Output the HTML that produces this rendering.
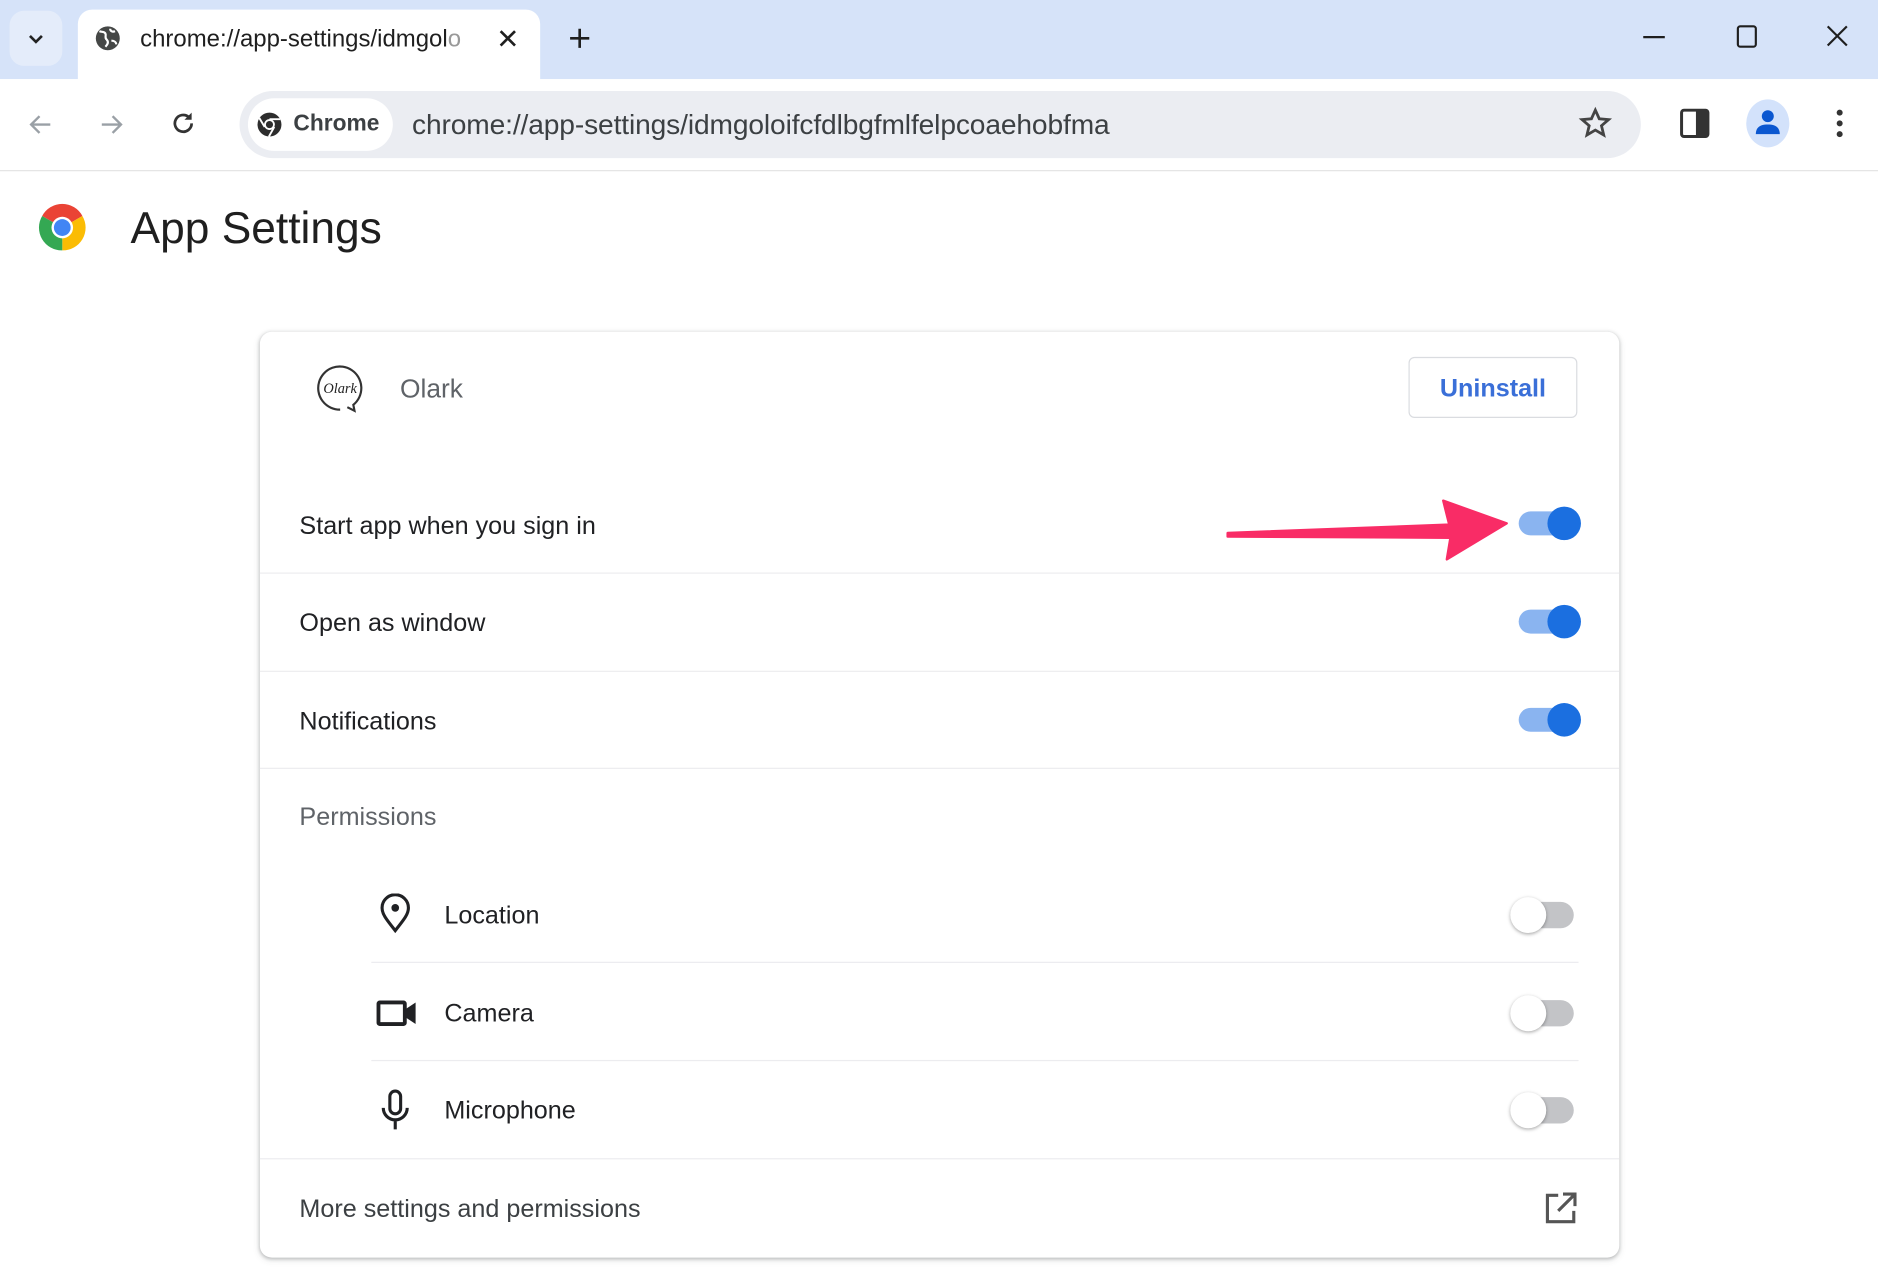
<!DOCTYPE html>
<html><head><meta charset="utf-8">
<style>
html,body{margin:0;padding:0;width:1878px;height:1270px;overflow:hidden;background:#fff;font-family:"Liberation Sans",Arial,sans-serif;}
#s{position:absolute;left:0;top:0;width:1568px;height:1061px;transform:scale(1.19770);transform-origin:0 0;background:#fff;}
.a{position:absolute;}
.t{position:absolute;white-space:nowrap;color:#202124;}
.on .tr{position:absolute;left:0;top:0;width:48px;height:20px;border-radius:10px;background:#8ab4f0;}
.on .th{position:absolute;left:24px;top:-4px;width:28px;height:28px;border-radius:50%;background:#1b6fe0;}
.off .tr{position:absolute;left:8px;top:0;width:44px;height:22px;border-radius:11px;background:#c3c4c7;}
.off .th{position:absolute;left:-1px;top:-4px;width:30px;height:30px;border-radius:50%;background:#fff;box-shadow:0 1px 3px rgba(0,0,0,.35);}
.sep{position:absolute;height:1px;background:#ececef;}
.r{font-size:21px;}
</style></head><body>
<div id="s">
<div class="a" style="left:0;top:0;width:1568px;height:66px;background:#d6e3f9;"></div>
<div class="a" style="left:8px;top:9px;width:44px;height:46px;border-radius:12px;background:#e4ecfa;"></div>
<svg class="a" style="left:20px;top:22px" width="20" height="20" viewBox="0 0 20 20"><path d="M5 8l5 5 5-5" fill="none" stroke="#222" stroke-width="2.2"/></svg>
<div class="a" style="left:65px;top:8px;width:386px;height:60px;background:#fff;border-radius:12px 12px 0 0;"></div>
<svg class="a" style="left:78px;top:20px" width="24" height="24" viewBox="0 0 24 24"><circle cx="12" cy="12" r="10" fill="#454746"/><path d="M5 6c2 1 4 0 5 2s-1 3 1 5 1 4-1 6M14 4c0 2 2 3 4 2M15 14c2 0 4 1 4 3" fill="none" stroke="#fff" stroke-width="1.8"/></svg>
<div class="t" style="left:117px;top:22px;font-size:20px;color:#1f1f1f;">chrome://app-settings/idmgol<span style="color:#999">o</span></div>
<svg class="a" style="left:415px;top:23px" width="18" height="18" viewBox="0 0 18 18"><path d="M3 3l12 12M15 3L3 15" stroke="#1f1f1f" stroke-width="2.2"/></svg>
<svg class="a" style="left:474px;top:22px" width="20" height="20" viewBox="0 0 20 20"><path d="M10 2v16M2 10h16" stroke="#1f1f1f" stroke-width="2.2"/></svg>
<svg class="a" style="left:1370px;top:20px" width="22" height="22"><path d="M2 11h18" stroke="#1f1f1f" stroke-width="1.8"/></svg>
<svg class="a" style="left:1448px;top:20px" width="22" height="22"><rect x="3" y="2" width="15" height="17" rx="2" fill="none" stroke="#1f1f1f" stroke-width="1.8"/></svg>
<svg class="a" style="left:1523px;top:19px" width="22" height="22"><path d="M3 3l16 16M19 3L3 19" stroke="#1f1f1f" stroke-width="1.8"/></svg>
<svg class="a" style="left:22px;top:92px" width="24" height="24" viewBox="0 0 24 24"><path d="M20 12H5M11 5l-7 7 7 7" fill="none" stroke="#9aa0a6" stroke-width="2"/></svg>
<svg class="a" style="left:81px;top:92px" width="24" height="24" viewBox="0 0 24 24"><path d="M4 12h15M13 5l7 7-7 7" fill="none" stroke="#9aa0a6" stroke-width="2"/></svg>
<svg class="a" style="left:141px;top:91px" width="24" height="24" viewBox="0 0 24 24"><path d="M19 12a7 7 0 1 1-2.2-5.1" fill="none" stroke="#333" stroke-width="2.3"/><path d="M19 3v6h-6z" fill="#333"/></svg>
<div class="a" style="left:200px;top:76px;width:1170px;height:56px;border-radius:28px;background:#ebedf2;"></div>
<div class="a" style="left:207px;top:82px;width:121px;height:44px;border-radius:22px;background:#fff;"></div>
<svg class="a" style="left:213px;top:92px" width="24" height="24" viewBox="0 0 24 24"><circle cx="12" cy="12" r="10" fill="#2d2d2d"/><circle cx="12" cy="12" r="4.5" fill="#fff"/><circle cx="12" cy="12" r="3" fill="#2d2d2d"/><path d="M12 7.5h9M8 14l-4.5-7.5M16 14l-4.5 8" stroke="#fff" stroke-width="1.6"/></svg>
<div class="t" style="left:245px;top:93px;font-size:19px;font-weight:bold;color:#3c4043;">Chrome</div>
<div class="t" style="left:344px;top:91px;font-size:23.5px;color:#3c4043;letter-spacing:-0.1px;">chrome://app-settings/idmgoloifcfdlbgfmlfelpcoaehobfma</div>
<svg class="a" style="left:1318px;top:89px" width="28" height="28" viewBox="0 0 24 24"><path d="M12 2.5l2.8 6.2 6.7.6-5.1 4.4 1.6 6.6L12 16.8l-6 3.5 1.6-6.6-5.1-4.4 6.7-.6z" fill="none" stroke="#444" stroke-width="2"/></svg>
<svg class="a" style="left:1402px;top:90px" width="26" height="26"><rect x="2" y="2" width="22" height="22" rx="2" fill="none" stroke="#333" stroke-width="2.5"/><rect x="14" y="2" width="10" height="22" fill="#333"/></svg>
<div class="a" style="left:1458px;top:83px;width:36px;height:40px;border-radius:50%;background:#d3e2fb;"></div>
<svg class="a" style="left:1462px;top:88px" width="28" height="28" viewBox="0 0 28 28"><circle cx="14" cy="9" r="5" fill="#0b57d0"/><path d="M4 24c0-6 4-8 10-8s10 2 10 8z" fill="#0b57d0"/></svg>
<svg class="a" style="left:1530px;top:90px" width="12" height="28"><circle cx="6" cy="4" r="2.5" fill="#333"/><circle cx="6" cy="13" r="2.5" fill="#333"/><circle cx="6" cy="22" r="2.5" fill="#333"/></svg>
<div class="a" style="left:0;top:142px;width:1568px;height:1px;background:#e3e3e3;"></div>
<svg class="a" style="left:32px;top:170px" width="40" height="40" viewBox="0 0 40 40"><path d="M20 20L3.2 10.3A19 19 0 0 1 36.8 10.3z" fill="#ea4335"/><path d="M20 20L36.8 10.3A19 19 0 0 1 20 39z" fill="#fbbc04"/><path d="M20 20L20 39A19 19 0 0 1 3.2 10.3z" fill="#34a853"/><circle cx="20" cy="20" r="9" fill="#fff"/><circle cx="20" cy="20" r="7" fill="#4285f4"/></svg>
<div class="t" style="left:109px;top:170px;font-size:37px;color:#1f1f1f;">App Settings</div>
<div class="a" style="left:217px;top:277px;width:1135px;height:773px;border-radius:10px;background:#fff;box-shadow:0 1px 3px rgba(60,64,67,.3),0 2px 6px rgba(60,64,67,.12);"></div>
<svg class="a" style="left:262px;top:302px" width="44" height="44" viewBox="0 0 44 44"><path d="M22 40A18 18 0 1 1 33 36l1 5-6-3" fill="none" stroke="#333" stroke-width="1.8"/><text x="22" y="26" font-family="Liberation Serif,serif" font-style="italic" font-size="12" text-anchor="middle" fill="#222">Olark</text></svg>
<div class="t" style="left:334px;top:312px;font-size:22px;color:#5f6368;">Olark</div>
<div class="a" style="left:1176px;top:298px;width:141px;height:51px;border:1px solid #dadce0;border-radius:5px;box-sizing:border-box;"></div>
<div class="t" style="left:1176px;top:313px;width:141px;text-align:center;font-size:21px;font-weight:bold;color:#3a6fd8;">Uninstall</div>

<div class="t r" style="left:250px;top:428px;">Start app when you sign in</div>
<div class="a on" style="left:1268px;top:427px;"><div class="tr"></div><div class="th"></div></div>
<div class="sep" style="left:217px;top:478px;width:1135px;"></div>
<div class="t r" style="left:250px;top:509px;">Open as window</div>
<div class="a on" style="left:1268px;top:509px;"><div class="tr"></div><div class="th"></div></div>
<div class="sep" style="left:217px;top:560px;width:1135px;"></div>
<div class="t r" style="left:250px;top:591px;">Notifications</div>
<div class="a on" style="left:1268px;top:591px;"><div class="tr"></div><div class="th"></div></div>
<div class="sep" style="left:217px;top:641px;width:1135px;"></div>
<div class="t r" style="left:250px;top:671px;color:#5f6368;">Permissions</div>
<svg class="a" style="left:316px;top:746px" width="28" height="34" viewBox="0 0 28 34"><path d="M14 31C6 21 3 17 3 12a11 11 0 0 1 22 0c0 5-3 9-11 19z" fill="none" stroke="#202124" stroke-width="2.6"/><circle cx="14" cy="12" r="3.2" fill="#202124"/></svg>
<div class="t r" style="left:371px;top:753px;">Location</div>
<div class="a off" style="left:1262px;top:753px;"><div class="tr"></div><div class="th"></div></div>
<div class="sep" style="left:310px;top:803px;width:1008px;"></div>
<svg class="a" style="left:314px;top:834px" width="34" height="24" viewBox="0 0 34 24"><rect x="2" y="3" width="22" height="18" rx="1" fill="none" stroke="#202124" stroke-width="3.2"/><path d="M24 9l9-6v18l-9-6z" fill="#202124"/></svg>
<div class="t r" style="left:371px;top:835px;">Camera</div>
<div class="a off" style="left:1262px;top:835px;"><div class="tr"></div><div class="th"></div></div>
<div class="sep" style="left:310px;top:885px;width:1008px;"></div>
<svg class="a" style="left:316px;top:909px" width="28" height="36" viewBox="0 0 28 36"><rect x="9.5" y="2" width="9" height="19" rx="4.5" fill="none" stroke="#202124" stroke-width="2.6"/><path d="M4 16a10 10 0 0 0 20 0M14 26v8" fill="none" stroke="#202124" stroke-width="2.6"/></svg>
<div class="t r" style="left:371px;top:916px;">Microphone</div>
<div class="a off" style="left:1262px;top:916px;"><div class="tr"></div><div class="th"></div></div>
<div class="sep" style="left:217px;top:967px;width:1135px;"></div>
<div class="t r" style="left:250px;top:998px;color:#3c4043;">More settings and permissions</div>
<svg class="a" style="left:1288px;top:994px" width="30" height="30" viewBox="0 0 30 30"><path d="M13 4H4v22h22v-9" fill="none" stroke="#555" stroke-width="2.6"/><path d="M17 3h10v10M27 3L13 17" fill="none" stroke="#555" stroke-width="2.6"/></svg>
<svg class="a" style="left:1015px;top:410px" width="260" height="64" viewBox="0 0 260 64"><path d="M10 35L195 28 190 8 243 27 193 57 196 39 10 38z" fill="#f92c66" stroke="#f92c66" stroke-width="2" stroke-linejoin="round"/></svg>
</div>
</body></html>
